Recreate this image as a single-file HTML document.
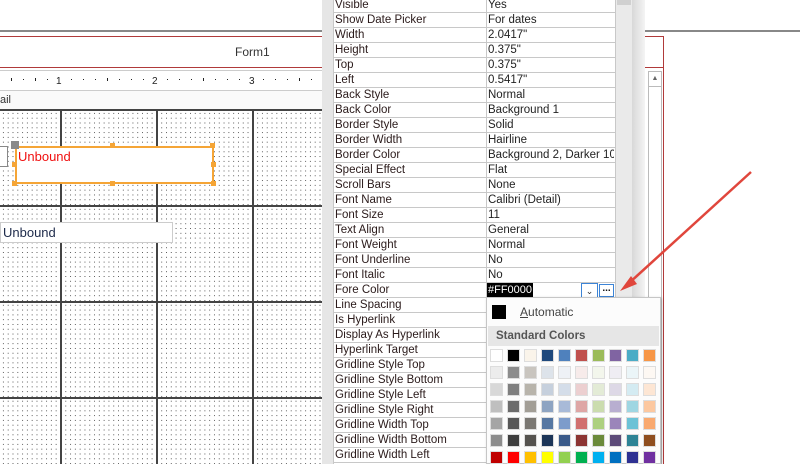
<!DOCTYPE html>
<html><head><meta charset="utf-8"><style>
*{margin:0;padding:0;box-sizing:border-box}
body{width:800px;height:464px;overflow:hidden;background:#fff;position:relative;font-family:"Liberation Sans",sans-serif;}
.abs{position:absolute}
.dots{background-color:#fff;background-image:radial-gradient(circle,#555 0.45px,transparent 0.75px);background-size:4.8px 4.8px;background-position:1px 1px}
.hl{position:absolute;height:2px;background:#444;left:0;width:322px}
.vl{position:absolute;width:2px;background:#444;top:110px;height:354px}
.ps{position:absolute;left:333px;top:0;width:283px}
.row{position:absolute;left:0;width:283px;height:15px;border-bottom:1px solid #c8c8c8;font-size:11.5px;line-height:15px;color:#2a1a1a;white-space:nowrap}
.row .l{position:absolute;left:2px;top:0}
.row .v{position:absolute;left:155px;top:0;color:#222;width:126px;overflow:hidden}
.sw{position:absolute;width:13px;height:13px;border:1px solid #ddd}
</style></head><body>
<div class="abs" style="left:0;top:30px;width:322px;height:2px;background:#888"></div>
<div class="abs" style="left:0;top:36px;width:322px;height:1px;background:#b03a3a"></div>
<div class="abs" style="left:235px;top:45px;font-size:12px;color:#333">Form1</div>
<div class="abs" style="left:0;top:67px;width:322px;height:1px;background:#b03a3a"></div>
<div class="abs" style="left:0;top:70px;width:322px;height:1px;background:#ccc"></div>
<div class="abs" style="left:0;top:70px;width:322px;height:20px">
<svg width="322" height="20">
<g fill="#222">
<rect x="11" y="8" width="1" height="3"/><rect x="23" y="9" width="1" height="1"/><rect x="35" y="8" width="1" height="3"/><rect x="47" y="9" width="1" height="1"/>
<rect x="71" y="9" width="1" height="1"/><rect x="83" y="9" width="1" height="1"/><rect x="95" y="9" width="1" height="1"/><rect x="107" y="8" width="1" height="3"/><rect x="119" y="9" width="1" height="1"/><rect x="131" y="9" width="1" height="1"/><rect x="143" y="9" width="1" height="1"/>
<rect x="167" y="9" width="1" height="1"/><rect x="179" y="9" width="1" height="1"/><rect x="191" y="9" width="1" height="1"/><rect x="203" y="8" width="1" height="3"/><rect x="215" y="9" width="1" height="1"/><rect x="227" y="9" width="1" height="1"/><rect x="239" y="9" width="1" height="1"/>
<rect x="263" y="9" width="1" height="1"/><rect x="275" y="9" width="1" height="1"/><rect x="287" y="9" width="1" height="1"/><rect x="299" y="8" width="1" height="3"/><rect x="311" y="9" width="1" height="1"/>
</g>
<text x="56" y="14" font-size="10" font-family="Liberation Sans" fill="#222">1</text>
<text x="152" y="14" font-size="10" font-family="Liberation Sans" fill="#222">2</text>
<text x="249" y="14" font-size="10" font-family="Liberation Sans" fill="#222">3</text>
</svg></div>
<div class="abs" style="left:0;top:90px;width:322px;height:1px;background:#ccc"></div>
<div class="abs" style="left:0;top:91px;width:322px;height:18px;background:#fafafa;font-size:11px;line-height:18px;color:#333">ail</div>
<div class="abs dots" style="left:0;top:110px;width:322px;height:354px"></div>
<div class="hl" style="top:109px"></div>
<div class="hl" style="top:205px"></div>
<div class="hl" style="top:301px"></div>
<div class="hl" style="top:397px"></div>
<div class="vl" style="left:60px"></div>
<div class="vl" style="left:156px"></div>
<div class="vl" style="left:252px"></div>
<div class="abs" style="left:-2px;top:146px;width:10px;height:21px;background:#fff;border:1px solid #888"></div>
<div class="abs" style="left:15px;top:146px;width:199px;height:38px;background:#fff;border:2px solid #f5a536"></div>
<div class="abs" style="left:18px;top:149px;font-size:13px;color:#f01010">Unbound</div>
<div class="abs" style="left:11px;top:141px;width:8px;height:8px;background:#8a8a8a"></div>
<div class="abs" style="left:110px;top:143px;width:5px;height:5px;background:#f5a536"></div>
<div class="abs" style="left:210px;top:143px;width:5px;height:5px;background:#f5a536"></div>
<div class="abs" style="left:12px;top:162px;width:5px;height:5px;background:#f5a536"></div>
<div class="abs" style="left:211px;top:162px;width:5px;height:5px;background:#f5a536"></div>
<div class="abs" style="left:12px;top:181px;width:5px;height:5px;background:#f5a536"></div>
<div class="abs" style="left:110px;top:181px;width:5px;height:5px;background:#f5a536"></div>
<div class="abs" style="left:211px;top:181px;width:5px;height:5px;background:#f5a536"></div>
<div class="abs" style="left:0;top:222px;width:173px;height:21px;background:#fff;border:1px solid #ccc;font-size:13px;line-height:19px;color:#1d2a4a;padding-left:2px">Unbound</div>
<div class="abs" style="left:322px;top:0;width:11px;height:464px;background:#e6e6e6"></div>
<div class="abs" style="left:645px;top:30px;width:155px;height:2px;background:#888"></div>
<div class="abs" style="left:645px;top:36px;width:19px;height:1px;background:#b03a3a"></div>
<div class="abs" style="left:645px;top:67px;width:19px;height:1px;background:#b03a3a"></div>
<div class="abs" style="left:663px;top:36px;width:1px;height:428px;background:#b03a3a"></div>
<div class="abs" style="left:648px;top:71px;width:14px;height:393px;border:1px solid #bbb;background:#fff"></div>
<div class="abs" style="left:648px;top:71px;width:14px;height:16px;border:1px solid #bbb;background:#fff;font-size:7px;text-align:center;line-height:14px;color:#666">▲</div>
<div class="ps" style="height:464px;background:#fff;border-left:1px solid #c8c8c8;border-right:1px solid #c8c8c8">
<div class="abs" style="left:152px;top:0;width:1px;height:464px;background:#c8c8c8"></div>
</div>
<div class="abs" style="left:616px;top:0;width:16px;height:464px;background:#eaeaea"></div>
<div class="abs" style="left:617px;top:0;width:14px;height:5px;background:#d0d0d0"></div>
<div class="abs" style="left:632px;top:0;width:13px;height:464px;background:linear-gradient(90deg,#d8d8d8,#f4f4f4)"></div>
<div class="ps" id="rows"></div>
<div class="abs" style="left:487px;top:283px;width:46px;height:14px;background:#000;color:#fff;font-size:11px;line-height:14px;padding-left:1px;white-space:nowrap;overflow:hidden">#FF0000</div>
<div class="abs" style="left:581px;top:283px;width:17px;height:15px;border:1px solid #3c84d6;background:#fff;font-size:9px;text-align:center;line-height:14px;color:#333">&#8964;</div>
<div class="abs" style="left:599px;top:284px;width:15px;height:13px;border:1px solid #3c84d6;background:#fff;font-size:10px;font-weight:bold;text-align:center;line-height:8px;color:#111">...</div>
<svg class="abs" style="left:0;top:0" width="800" height="464">
<line x1="751" y1="172" x2="628" y2="284" stroke="#e0463c" stroke-width="2.5"/>
<polygon points="620,291 631,276 637,284" fill="#e0463c"/>
</svg>
<div class="abs" style="left:486px;top:297px;width:175px;height:167px;background:#fcfcfc;border:1px solid #c6c6c6;box-shadow:1px 1px 3px rgba(0,0,0,.2)"></div>
<div class="abs" style="left:492px;top:305px;width:14px;height:14px;background:#000"></div>
<div class="abs" style="left:520px;top:305px;font-size:12px;color:#444"><u>A</u>utomatic</div>
<div class="abs" style="left:488px;top:326px;width:171px;height:20px;background:#e6e6e6;font-size:11.5px;font-weight:bold;color:#555;line-height:20px;padding-left:8px">Standard Colors</div>
<div id="grid"></div>
<script>
var L=["Visible","Show Date Picker","Width","Height","Top","Left","Back Style","Back Color","Border Style","Border Width","Border Color","Special Effect","Scroll Bars","Font Name","Font Size","Text Align","Font Weight","Font Underline","Font Italic","Fore Color","Line Spacing","Is Hyperlink","Display As Hyperlink","Hyperlink Target","Gridline Style Top","Gridline Style Bottom","Gridline Style Left","Gridline Style Right","Gridline Width Top","Gridline Width Bottom","Gridline Width Left"];
var V=["Yes","For dates","2.0417\"","0.375\"","0.375\"","0.5417\"","Normal","Background 1","Solid","Hairline","Background 2, Darker 10","Flat","None","Calibri (Detail)","11","General","Normal","No","No","","","","","","","","","","","",""];
var h="";for(var i=0;i<L.length;i++){h+='<div class="row" style="top:'+(-2+15*i)+'px"><span class="l">'+L[i]+'</span><span class="v">'+V[i]+'</span></div>';}
document.getElementById("rows").innerHTML=h;
var C=[["#ffffff","#000000","#faf4ea","#1f497d","#4f81bd","#c0504d","#9bbb59","#8064a2","#4bacc6","#f79646"],
["#ececec","#8c8c8c","#c9c5bf","#dde3ea","#eef1f6","#f7ebea","#f3f6ec","#efedf3","#ebf5f8","#fdf8f3"],
["#d8d8d8","#7f7f7f","#b8b4ab","#c6d0dd","#d4dde9","#eccfd0","#e3ebd6","#ddd8e6","#d4ebf2","#fde6d4"],
["#bfbfbf","#6b6b6b","#a29e96","#8ea4c2","#a8bad8","#dea6a5","#cbdcae","#b8aed0","#9fd6e2","#fcc8a0"],
["#a5a5a5","#575757","#7b7873","#5677a2","#7d9ccb","#d1706f","#add07f","#9b85ba","#6cc2d6","#f9a96f"],
["#8c8c8c","#3e3e3e","#55534f","#1c3558","#3a5a89","#8c3432","#6b8a3a","#5c4a78","#2d8395","#8f4e1f"],
["#c00000","#ff0000","#ffc000","#ffff00","#92d050","#00b050","#00b0f0","#0070c0","#2e3192","#7030a0"]];
var g="";for(var r=0;r<7;r++)for(var c=0;c<10;c++){g+='<div class="sw" style="left:'+(490+17*c)+'px;top:'+(349+17*r)+'px;background:'+C[r][c]+'"></div>';}
document.getElementById("grid").innerHTML=g;
</script>
</body></html>
